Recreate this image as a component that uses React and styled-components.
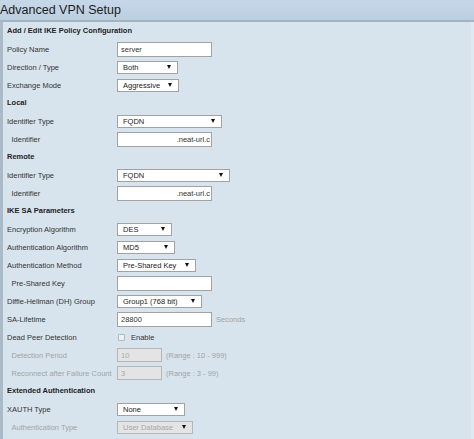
import React from "react";
import styled, { createGlobalStyle } from "styled-components";

const GlobalStyle = createGlobalStyle`
  html, body {
    margin: 0;
    padding: 0;
  }
  body {
    background: #d8e4ed;
    font-family: "Liberation Sans", Arial, sans-serif;
  }
`;

const Page = styled.div`
  width: 474px;
  height: 439px;
  overflow: hidden;
  background: #d8e4ed;
`;

const Header = styled.div`
  height: 20px;
  line-height: 20px;
  border-bottom: 2px solid #a3b3bf;
  background: linear-gradient(#c6d7e9, #bccfe1);
  color: #1c1c1c;
  font-size: 12.5px;
  white-space: nowrap;
`;

const Body = styled.div`
  height: 417px;
  border-left: 3px solid #abbac8;
  border-right: 3px solid #e1e9f0;
  padding-left: 4px;
  font-size: 7.5px;
  color: #333;
`;

const Section = styled.div`
  height: 18px;
  line-height: 18px;
  font-weight: bold;
  color: #222;
  white-space: nowrap;
`;

const Row = styled.div`
  display: grid;
  grid-template-columns: 110px 1fr;
  align-items: center;
  height: 18px;
`;

const Label = styled.div`
  padding-left: ${(p) => (p.$indent ? "4.5px" : "0")};
  color: ${(p) => (p.$muted ? "#a3a3a3" : "#333")};
  white-space: nowrap;
`;

const Control = styled.div`
  display: flex;
  align-items: center;
  gap: ${(p) => p.$gap || 4}px;
`;

const TextInput = styled.input`
  box-sizing: border-box;
  width: ${(p) => p.$w}px;
  height: ${(p) => p.$h || 15}px;
  margin: 0;
  padding: 0 ${(p) => (p.$right ? "1px" : "3px")};
  border: 1px solid ${(p) => (p.disabled ? "#b6b6b6" : "#a2a2a2")};
  border-radius: 0;
  background: ${(p) => (p.disabled ? "#e4e4e4" : "#fff")};
  color: ${(p) => (p.disabled ? "#a8a8a8" : "#333")};
  font-family: "Liberation Sans", Arial, sans-serif;
  font-size: 7.5px;
  text-align: ${(p) => (p.$right ? "right" : "left")};
  outline: none;
`;

const SelectBox = styled.div`
  box-sizing: border-box;
  width: ${(p) => p.$w}px;
  height: 13px;
  padding: 0 6px 0 5px;
  display: flex;
  align-items: center;
  justify-content: space-between;
  border: 1px solid ${(p) => (p.$disabled ? "#b6b6b6" : "#a2a2a2")};
  background: ${(p) => (p.$disabled ? "#e4e4e4" : "#fff")};
  color: ${(p) => (p.$disabled ? "#a8a8a8" : "#222")};
  white-space: nowrap;
`;

const Caret = styled.span`
  width: 0;
  height: 0;
  border-left: 2.5px solid transparent;
  border-right: 2.5px solid transparent;
  border-top: 4px solid #111;
`;

const Note = styled.span`
  color: #a3a3a3;
  white-space: nowrap;
`;

const CheckBox = styled.span`
  box-sizing: border-box;
  width: 7px;
  height: 7px;
  margin-left: 1px;
  border: 1px solid #b3b9bf;
  border-radius: 1px;
  background: #eef2f5;
`;

function Select({ w, value, disabled }) {
  return (
    <SelectBox $w={w} $disabled={disabled}>
      <span>{value}</span>
      <Caret />
    </SelectBox>
  );
}

function Field({ label, indent, muted, children, gap }) {
  return (
    <Row>
      <Label $indent={indent} $muted={muted}>
        {label}
      </Label>
      <Control $gap={gap}>{children}</Control>
    </Row>
  );
}

export default function App() {
  return (
    <Page>
      <GlobalStyle />
      <Header>Advanced VPN Setup</Header>
      <Body>
        <Section>Add / Edit IKE Policy Configuration</Section>
        <Field label="Policy Name">
          <TextInput $w={95} defaultValue="server" readOnly />
        </Field>
        <Field label="Direction / Type">
          <Select w={61} value="Both" />
        </Field>
        <Field label="Exchange Mode">
          <Select w={62} value="Aggressive" />
        </Field>

        <Section>Local</Section>
        <Field label="Identifier Type">
          <Select w={105} value="FQDN" />
        </Field>
        <Field label="Identifier" indent>
          <TextInput $w={95} $right defaultValue=".neat-url.c" readOnly />
        </Field>

        <Section>Remote</Section>
        <Field label="Identifier Type">
          <Select w={113} value="FQDN" />
        </Field>
        <Field label="Identifier" indent>
          <TextInput $w={95} $right defaultValue=".neat-url.c" readOnly />
        </Field>

        <Section>IKE SA Parameters</Section>
        <Field label="Encryption Algorithm">
          <Select w={55} value="DES" />
        </Field>
        <Field label="Authentication Algorithm">
          <Select w={58} value="MD5" />
        </Field>
        <Field label="Authentication Method">
          <Select w={79} value="Pre-Shared Key" />
        </Field>
        <Field label="Pre-Shared Key" indent>
          <TextInput $w={95} defaultValue="" readOnly />
        </Field>
        <Field label="Diffie-Hellman (DH) Group">
          <Select w={85} value="Group1 (768 bit)" />
        </Field>
        <Field label="SA-Lifetime">
          <TextInput $w={95} defaultValue="28800" readOnly />
          <Note>Seconds</Note>
        </Field>
        <Field label="Dead Peer Detection" gap={6}>
          <CheckBox />
          <span>Enable</span>
        </Field>
        <Field label="Detection Period" indent muted>
          <TextInput $w={45} $h={14} defaultValue="10" disabled />
          <Note>(Range : 10 - 999)</Note>
        </Field>
        <Field label="Reconnect after Failure Count" indent muted>
          <TextInput $w={45} $h={14} defaultValue="3" disabled />
          <Note>(Range : 3 - 99)</Note>
        </Field>

        <Section>Extended Authentication</Section>
        <Field label="XAUTH Type">
          <Select w={68} value="None" />
        </Field>
        <Field label="Authentication Type" indent muted>
          <Select w={76} value="User Database" disabled />
        </Field>
      </Body>
    </Page>
  );
}
